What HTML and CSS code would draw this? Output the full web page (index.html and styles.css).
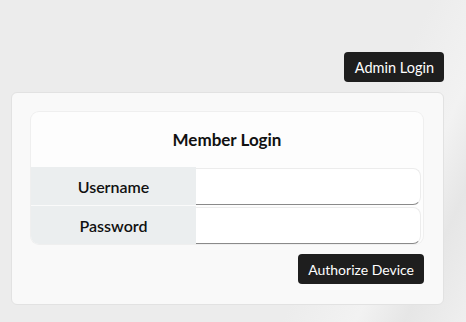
FILE: index.html
```html
<!DOCTYPE html>
<html lang="en">
<head>
  <meta charset="UTF-8">
  <title>Member Login</title>
  <link rel="stylesheet" href="styles.css">
</head>
<body>

<div class="page">
  <div class="top-bar">
    <button class="btn btn-admin" type="button">Admin Login</button>
  </div>

  <form class="card">
    <table class="login-table">
      <thead>
        <tr>
          <th colspan="2">Member Login</th>
        </tr>
      </thead>
      <tbody>
        <tr>
          <td class="label">Username</td>
          <td class="field"><input type="text" id="username"></td>
        </tr>
        <tr>
          <td class="label">Password</td>
          <td class="field"><input type="password" id="password"></td>
        </tr>
      </tbody>
    </table>
    <div class="actions">
      <button class="btn" type="submit">Authorize Device</button>
    </div>
  </form>
</div>

</body>
</html>
```

FILE: styles.css
```css
body {
  margin: 0;
  font-family: 'Lato', 'Open Sans', sans-serif;
  background: linear-gradient(115deg, #ececec 0%, #ececec 70%, #f2f2f2 82%, #e6e6e6 90%, #efefef 100%);
  min-height: 322px;
  color: #111;
}

.page {
  width: 433px;
  margin-left: 11px;
  padding-top: 52px;
}

.top-bar {
  display: flex;
  justify-content: flex-end;
  margin-bottom: 10px;
}

.btn {
  background-color: #1e1e1e;
  color: #fff;
  border: none;
  border-radius: 4px;
  height: 30px;
  padding: 0 10px;
  font-family: inherit;
  font-size: 14px;
  cursor: pointer;
}

.btn-admin {
  font-size: 14.5px;
  padding: 0 10px 0 11px;
}

.card {
  background-color: #f9f9f9;
  border: 1px solid #e2e2e2;
  border-radius: 6px;
  padding: 19px 19px 20px;
}

.login-table {
  width: 392px;
  border-collapse: separate;
  border-spacing: 0;
  background-color: #fdfdfd;
  border-radius: 8px;
  box-shadow: 0 0 0 1px #efefef;
}

.login-table th {
  height: 55px;
  padding: 0;
  font-size: 17px;
  font-weight: 700;
  text-align: center;
}

.login-table td {
  padding: 0;
  height: 38px;
}

.label {
  width: 165px;
  background-color: #ebeeef;
  text-align: center;
  font-size: 16px;
  font-weight: 600;
}

tbody tr:first-child .label {
  border-bottom: 1px solid #fafafa;
}

tbody tr:last-child .label {
  border-bottom-left-radius: 8px;
}

.field {
  padding-right: 2px !important;
}

.field input {
  display: block;
  box-sizing: border-box;
  width: 225px;
  height: 37px;
  border: 1px solid #ececec;
  border-bottom: 1px solid #8a8a8a;
  border-left: none;
  border-radius: 0 8px 8px 0;
  background-color: #fff;
  font-size: 14px;
  outline: none;
}

.actions {
  display: flex;
  justify-content: flex-end;
  margin-top: 10px;
}
```
